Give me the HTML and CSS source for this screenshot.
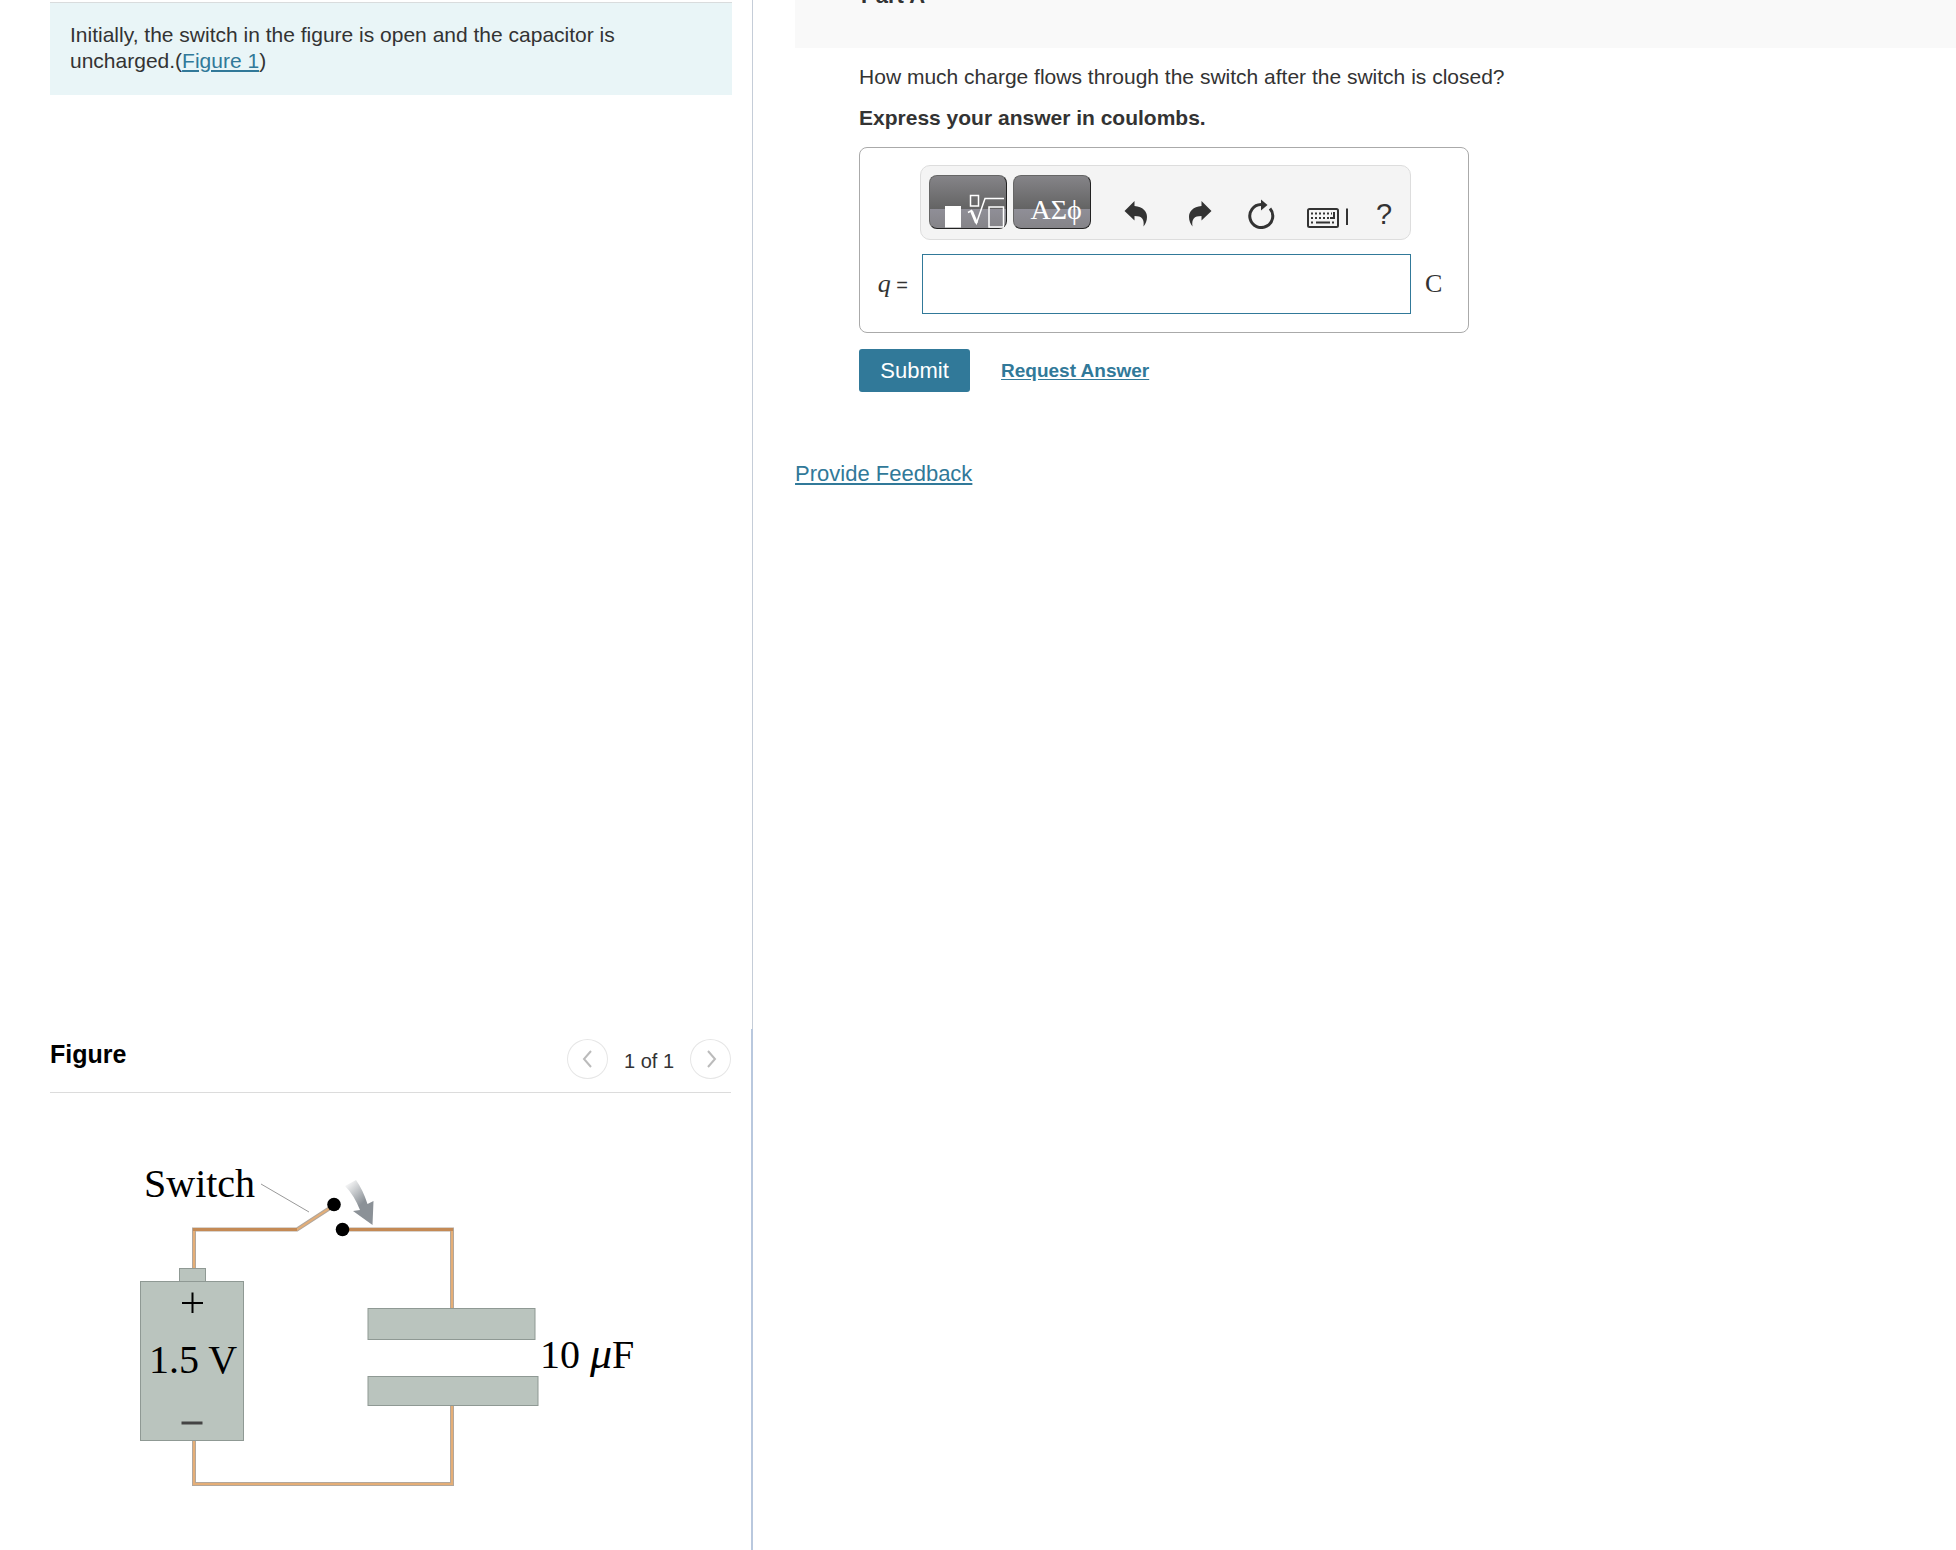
FILE: index.html
```html
<!DOCTYPE html>
<html lang="en">
<head>
  <meta charset="UTF-8" />
  <meta name="viewport" content="width=device-width, initial-scale=1.0">
  <title>Part A</title>
  <link rel="stylesheet" href="styles.css">
</head>
<body>
<div class="layout">
  <aside class="left">
    <section class="intro">
      <p class="intro-text">Initially, the switch in the figure is open and the capacitor is uncharged.(<a href="#figure">Figure 1</a>)</p>
    </section>

    <section class="figure" id="figure">
      <header class="figure-header">
        <h2>Figure</h2>
        <nav class="pager">
          <button type="button" aria-label="Previous figure">
            <svg width="12" height="18" viewBox="0 0 12 18"><path d="M9 1 L2 9 L9 17"/></svg>
          </button>
          <span>1 of 1</span>
          <button type="button" aria-label="Next figure">
            <svg width="12" height="18" viewBox="0 0 12 18"><path d="M3 1 L10 9 L3 17"/></svg>
          </button>
        </nav>
      </header>

      <svg class="circuit" width="540" height="370" viewBox="0 0 540 370" role="img" aria-label="Battery, switch and capacitor circuit">
        <defs>
          <linearGradient id="arrowFade" x1="0" y1="0" x2="0.6" y2="1">
            <stop offset="0.05" stop-color="#8b9197" stop-opacity="0"/>
            <stop offset="0.65" stop-color="#8b9197"/>
          </linearGradient>
        </defs>

        <!-- wires -->
        <path class="wire-edge" d="M64 119 V79.5 H167 L200 58 M212 79.5 H322 V158 M64 290 V334 H322 V256"/>
        <path class="wire" d="M64 119 V79.5 H167 L200 58 M212 79.5 H322 V158 M64 290 V334 H322 V256"/>
        <path class="wire-dark" d="M63 79.5 H167 M212 79.5 H323"/>

        <!-- switch -->
        <circle cx="204" cy="54.5" r="6.8"/>
        <circle cx="212.5" cy="79.5" r="6.8"/>
        <path class="pointer" d="M131 34 L179 62"/>
        <path fill="url(#arrowFade)" d="M215 36 Q224 45 230 60 L223 61 L242.500 75 L243.500 51 L237.500 54 Q233 40 226 30 Z"/>

        <!-- battery -->
        <rect class="part" x="49.500" y="118.500" width="26" height="13"/>
        <rect class="part" x="10.500" y="131.500" width="103" height="159"/>
        <path class="sign" d="M52 153 H73 M62.500 142.500 V163"/>
        <path class="sign minus" d="M51.500 273 H72.500"/>

        <!-- capacitor -->
        <rect class="part" x="238" y="158.500" width="167" height="31"/>
        <rect class="part" x="238" y="226.500" width="170" height="29"/>

        <text x="14" y="47">Switch</text>
        <text x="19" y="223">1.5 V</text>
        <text x="410" y="218">10 <tspan class="mu">μ</tspan>F</text>
      </svg>
    </section>
  </aside>

  <main class="right">
    <header class="part-header"><h1>Part A</h1></header>

    <form class="question">
      <p>How much charge flows through the switch after the switch is closed?</p>
      <p class="instruction">Express your answer in coulombs.</p>

      <div class="answer-box">
        <div class="toolbar">
          <button type="button" class="palette" aria-label="Templates">
            <svg width="76" height="52" viewBox="1 1 76 52">
              <rect x="16" y="31" width="16" height="21.500"/>
              <rect x="41.500" y="20.500" width="8" height="10.500"/>
              <path d="M39 37.500 L42.500 35.500 L47.500 48 L56 23.500 H75"/>
              <path class="thick" d="M42.500 36 L47.500 48"/>
              <rect x="60" y="32" width="14.500" height="20"/>
            </svg>
          </button>
          <button type="button" class="palette greek" aria-label="Symbols">ΑΣϕ</button>
          <div class="tools">
            <button type="button" aria-label="Undo">
              <svg width="52" height="30" viewBox="0 0 52 30"><path d="M14.500 12 L24.500 2 V7 C33 8 37 12 37 18 C37 22 35.500 25 33.500 27.500 C34.500 20 32 17 24.500 17 V21.500 Z"/></svg>
            </button>
            <button type="button" aria-label="Redo">
              <svg width="52" height="30" viewBox="0 0 52 30"><path d="M39.500 12 L29.500 2 V7 C21 8 17 12 17 18 C17 22 18.500 25 20.500 27.500 C19.500 20 22 17 29.500 17 V21.500 Z"/></svg>
            </button>
            <button type="button" aria-label="Reset">
              <svg width="52" height="30" viewBox="0 0 52 30">
                <path class="line heavy" d="M36 9.500 A11.500 11.500 0 1 1 27 5.500"/>
                <path d="M27 0.500 L33.500 6 L27 11.500 Z"/>
              </svg>
            </button>
            <button type="button" aria-label="Keyboard shortcuts">
              <svg width="52" height="30" viewBox="0 0 52 30">
                <rect class="line" x="12" y="10" width="30" height="18" rx="1.500"/>
                <path class="line" stroke-dasharray="2 2" d="M15 14.500 H36 M15 19 H35 M15 23.500 H18"/>
                <path class="line" d="M38 13 V19 H34 M20 23.500 H34 M36 23.500 H38"/>
                <path class="line" d="M51 9.500 V26"/>
              </svg>
            </button>
            <button type="button" class="help" aria-label="Help">?</button>
          </div>
        </div>

        <label for="answer"><i>q</i> =</label>
        <input type="text" id="answer" name="answer">
        <span class="unit">C</span>
      </div>

      <div class="actions">
        <button type="submit" class="submit">Submit</button>
        <a href="#answer">Request Answer</a>
      </div>
    </form>

    <a href="#feedback" class="feedback">Provide Feedback</a>
  </main>
</div>
</body>
</html>
```

FILE: styles.css
```css
* {
  box-sizing: border-box;
}
body {
  margin: 0;
  font-family: "Liberation Sans", Arial, sans-serif;
  font-size: 21px;
  line-height: 26px;
  color: #333;
  background: #fff;
}
h1, h2, p {
  margin: 0;
}
a {
  color: #317999;
  text-underline-offset: 2px;
}
button {
  font-family: inherit;
  padding: 0;
  border: none;
  background: none;
  cursor: pointer;
}
svg {
  display: block;
}
.layout {
  display: grid;
  grid-template-columns: 38.5% 1fr;
  min-height: 100vh;
  overflow: hidden;
}

/* left column */
.left {
  display: flex;
  flex-direction: column;
}
.intro {
  flex: 1;
  padding: 2px 20px 0 50px;
  border-right: 1px solid #c5cdd8;
}
.intro-text {
  padding: 19px 20px 21px;
  border-top: 1px solid #d9dcdd;
  background: #e9f5f7;
}
.figure {
  padding: 10px 20px 0 50px;
  border-right: 2px solid #b9c8de;
}
.figure-header {
  display: flex;
  justify-content: space-between;
  align-items: flex-start;
  padding-bottom: 13px;
  border-bottom: 1px solid #dcdcdc;
}
.figure-header h2 {
  font-size: 25px;
  line-height: 30px;
  color: #000;
}
.pager {
  display: flex;
  align-items: center;
  gap: 16px;
}
.pager span {
  padding-top: 4px;
  font-size: 20px;
}
.pager button {
  display: flex;
  justify-content: center;
  align-items: center;
  width: 41px;
  height: 40px;
  border: 1px solid #e6e6e6;
  border-radius: 50%;
}
.pager path {
  fill: none;
  stroke: #bbb;
  stroke-width: 2;
}
.circuit {
  max-width: 100%;
  margin: 57px 0 30px 80px;
  font-family: "Liberation Serif", "Times New Roman", serif;
  font-size: 40px;
}
.circuit text {
  fill: #000;
}
.mu {
  font-size: 44px;
  font-style: italic;
}
.wire-edge, .wire, .wire-dark, .pointer, .sign {
  fill: none;
}
.wire-edge {
  stroke: #b3a79b;
  stroke-width: 4;
}
.wire {
  stroke: #e5ae76;
  stroke-width: 2;
}
.wire-dark {
  stroke: #c48a55;
  stroke-width: 3;
}
.pointer {
  stroke: #999;
}
.part {
  fill: #bac4be;
  stroke: #8f9994;
}
.sign {
  stroke: #000;
  stroke-width: 2;
}
.minus {
  stroke: #444;
  stroke-width: 3;
}

/* right column */
.right {
  padding-left: 42px;
}
/* the heading is scrolled under the top edge */
.part-header {
  margin-top: -25px;
  padding: 8px 66px 39px;
  background: #f9f9f9;
}
.part-header h1 {
  font-size: 22px;
  line-height: 26px;
}
.question {
  padding: 16px 64px 0;
}
.question p {
  margin-bottom: 15px;
}
.question .instruction {
  margin-bottom: 16px;
  font-weight: bold;
}
.answer-box {
  display: grid;
  grid-template-columns: 60px 491px 1fr;
  row-gap: 14px;
  align-items: center;
  max-width: 610px;
  padding: 17px 0 18px;
  border: 1px solid #aaa;
  border-radius: 8px;
}
.toolbar {
  grid-column: 2 / 3;
  display: flex;
  gap: 6px;
  padding: 9px 0 10px 8px;
  border: 1px solid #ddd;
  border-radius: 10px;
  background: #f4f4f4;
}
.palette {
  flex: none;
  width: 78px;
  height: 54px;
  border: 1px solid #666;
  border-right-color: #222;
  border-bottom-color: #222;
  border-radius: 8px;
  background: linear-gradient(#858488, #636363 64%, #8f8e97 64%, #858488);
}
.palette rect, .palette path {
  fill: none;
  stroke: #fff;
  stroke-width: 1.5;
}
.palette rect:first-child {
  fill: #fff;
  stroke: none;
}
.palette .thick {
  stroke-width: 3;
}
.greek {
  padding: 16px 0 0 8px;
  color: #fff;
  font-family: "Liberation Serif", "Times New Roman", serif;
  font-size: 28px;
}
.tools {
  display: flex;
  align-items: flex-end;
  gap: 10px;
  padding-left: 13px;
}
.tools button {
  width: 52px;
}
.tools path {
  fill: #333;
}
.tools .line {
  fill: none;
  stroke: #333;
  stroke-width: 2;
}
.tools .heavy {
  stroke-width: 3;
}
.tools .help {
  color: #333;
  font-size: 29px;
  line-height: 30px;
}
.answer-box label {
  grid-column: 1;
  padding-right: 12px;
  text-align: right;
  font-size: 20px;
}
.answer-box i, .unit {
  font-family: "Liberation Serif", "Times New Roman", serif;
  font-size: 26px;
}
.answer-box input {
  height: 60px;
  margin-left: 2px;
  padding: 0 10px;
  border: 1px solid #317999;
  font-size: 22px;
}
.unit {
  padding-left: 14px;
}
.actions {
  display: flex;
  align-items: center;
  gap: 31px;
  margin-top: 16px;
}
.submit {
  width: 111px;
  height: 43px;
  border-radius: 3px;
  background: #317999;
  color: #fff;
  font-size: 22px;
}
.actions a {
  font-size: 19px;
  font-weight: bold;
}
.feedback {
  display: inline-block;
  margin-top: 69px;
  font-size: 22px;
}
```
